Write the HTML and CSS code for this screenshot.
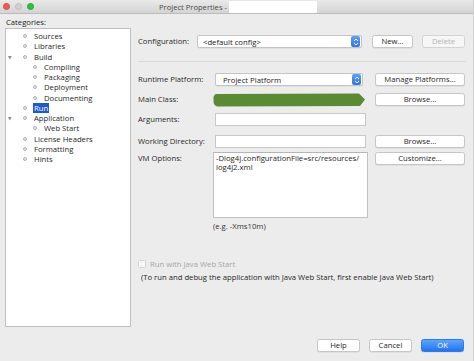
FILE: index.html
```html
<!DOCTYPE html>
<html>
<head>
<meta charset="utf-8">
<link rel="stylesheet" href="styles.css">
</head>
<body>
<div class="window">
  <div class="titlebar">
    <div class="lights">
      <span class="light red"></span>
      <span class="light gray"></span>
      <span class="light green"></span>
    </div>
    <div class="title"><span class="title-text">Project Properties -</span><span class="redact"></span></div>
  </div>
  <div class="main">
    <div class="left">
      <div class="cat-label">Categories:</div>
      <div class="tree">
        <div class="node l1"><span class="tw"></span><span class="dot"></span><span class="nt">Sources</span></div>
        <div class="node l1"><span class="tw"></span><span class="dot"></span><span class="nt">Libraries</span></div>
        <div class="node l1"><span class="tw">&#9660;</span><span class="dot"></span><span class="nt">Build</span></div>
        <div class="node l2"><span class="tw"></span><span class="dot"></span><span class="nt">Compiling</span></div>
        <div class="node l2"><span class="tw"></span><span class="dot"></span><span class="nt">Packaging</span></div>
        <div class="node l2"><span class="tw"></span><span class="dot"></span><span class="nt">Deployment</span></div>
        <div class="node l2"><span class="tw"></span><span class="dot"></span><span class="nt">Documenting</span></div>
        <div class="node l1"><span class="tw"></span><span class="dot"></span><span class="nt sel">Run</span></div>
        <div class="node l1"><span class="tw">&#9660;</span><span class="dot"></span><span class="nt">Application</span></div>
        <div class="node l2"><span class="tw"></span><span class="dot"></span><span class="nt">Web Start</span></div>
        <div class="node l1"><span class="tw"></span><span class="dot"></span><span class="nt">License Headers</span></div>
        <div class="node l1"><span class="tw"></span><span class="dot"></span><span class="nt">Formatting</span></div>
        <div class="node l1"><span class="tw"></span><span class="dot"></span><span class="nt">Hints</span></div>
      </div>
    </div>
    <div class="right">
      <div class="config-row">
        <span class="lbl cfg-lbl">Configuration:</span>
        <div class="combo cfg-combo"><span class="combo-text">&lt;default config&gt;</span><span class="stepper"><svg width="6" height="8" viewBox="0 0 6 8"><path d="M1 3 L3 1 L5 3 M1 5 L3 7 L5 5" fill="none" stroke="#fff" stroke-width="1"/></svg></span></div>
        <button class="btn btn-new">New...</button>
        <button class="btn btn-del" disabled>Delete</button>
      </div>
      <div class="sep"></div>
      <div class="form">
        <span class="lbl r1">Runtime Platform:</span>
        <div class="combo rt-combo r1"><span class="combo-text pp">Project Platform</span><span class="stepper"><svg width="6" height="8" viewBox="0 0 6 8"><path d="M1 3 L3 1 L5 3 M1 5 L3 7 L5 5" fill="none" stroke="#fff" stroke-width="1"/></svg></span></div>
        <button class="btn r1">Manage Platforms...</button>

        <span class="lbl r2">Main Class:</span>
        <div class="blob r2"><svg width="153" height="14" viewBox="0 0 153 14" preserveAspectRatio="none"><path d="M3 1 L146 0.5 L152 6.5 L147 13 L4 13.5 Q0 12 0.5 7 Q0 2 3 1 Z" fill="#5b8a35"/></svg></div>
        <button class="btn r2">Browse...</button>

        <span class="lbl r3">Arguments:</span>
        <div class="input r3"></div>
        <span class="r3"></span>

        <span class="lbl r4">Working Directory:</span>
        <div class="input r4"></div>
        <button class="btn r4">Browse...</button>

        <span class="lbl r5">VM Options:</span>
        <div class="textarea r5">-Dlog4j.configurationFile=src/resources/<br>log4j2.xml</div>
        <button class="btn r5">Customize...</button>

        <span class="r6"></span>
        <span class="hint r6">(e.g. -Xms10m)</span>
      </div>
      <div class="jws">
        <span class="chk"></span><span class="jws-text">Run with Java Web Start</span>
      </div>
      <div class="note">(To run and debug the application with Java Web Start, first enable Java Web Start)</div>
    </div>
  </div>
  <div class="footer">
    <button class="btn fbtn">Help</button>
    <button class="btn fbtn">Cancel</button>
    <button class="btn fbtn ok">OK</button>
  </div>
</div>
</body>
</html>
```

FILE: styles.css
```css
* { box-sizing: border-box; }
html, body { margin: 0; padding: 0; }
body {
  background: #ececec;
  font-family: "Open Sans", "DejaVu Sans", sans-serif;
  font-size: 7.7px;
  color: #262626;
}
.window {
  width: 474px;
  height: 361px;
  background: #ececec;
  display: flex;
  flex-direction: column;
  border-right: 1px solid #d0d0d0;
}
.titlebar {
  height: 14px;
  background: linear-gradient(#e9e9e9, #d4d4d4);
  border-bottom: 1px solid #bcbcbc;
  display: flex;
  align-items: center;
  position: relative;
}
.lights {
  display: flex;
  gap: 5px;
  padding-left: 3px;
}
.light {
  width: 7px;
  height: 7px;
  border-radius: 50%;
  display: block;
}
.light.red { background: #f25b55; border: 0.5px solid #d9463f; }
.light.gray { background: #d0d0d0; border: 0.5px solid #bdbdbd; }
.light.green { background: #2ac440; border: 0.5px solid #1ea82f; }
.title {
  position: absolute;
  left: 159px;
  top: 0;
  height: 13px;
  display: flex;
  align-items: center;
}
.title-text { color: #4a4a4a; font-size: 7.6px; }
.redact {
  display: block;
  width: 88px;
  height: 12px;
  margin-left: 2px;
  margin-top: 1px;
  background: #ffffff;
  border-radius: 1px;
}
.main {
  display: flex;
  height: 313px;
}
.left {
  width: 126px;
  margin-left: 5px;
  display: flex;
  flex-direction: column;
}
.cat-label {
  height: 14px;
  padding-top: 3px;
  padding-left: 1px;
  line-height: 10px;
  color: #222;
}
.tree {
  height: 299px;
  background: #fff;
  border: 1px solid #bfbfbf;
  padding-top: 2px;
}
.node {
  height: 10.25px;
  display: flex;
  align-items: center;
  line-height: 10px;
  white-space: nowrap;
}
.tw {
  width: 11px;
  padding-left: 2px;
  font-size: 4.5px;
  color: #8a8a8a;
  flex: none;
}
.dot {
  width: 4px;
  height: 4px;
  border-radius: 50%;
  border: 1px solid #b4b4b4;
  background: #e8e8e8;
  flex: none;
  margin-left: 6px;
}
.l2 .dot { margin-left: 16px; }
.nt {
  margin-left: 6px;
  padding: 0 1px;
  color: #1f1f1f;
}
.nt.sel {
  background: #1c5ad2;
  color: #fff;
}
.right {
  width: 328px;
  margin-left: 7px;
  padding-top: 21px;
  display: flex;
  flex-direction: column;
}
.config-row {
  display: flex;
  align-items: center;
  height: 13px;
}
.lbl { color: #2a2a2a; line-height: 13px; white-space: nowrap; }
.cfg-lbl { width: 59px; }
.combo {
  height: 13px;
  background: #fff;
  border: 1px solid #c4c4c4;
  border-radius: 2px;
  display: flex;
  align-items: center;
  justify-content: space-between;
  padding-left: 5px;
  padding-right: 1px;
  box-shadow: 0 0.5px 0.5px rgba(0,0,0,0.08);
}
.cfg-combo { width: 165px; }
.combo-text { color: #222; }
.combo-text.pp { padding-left: 2px; }
.stepper {
  width: 9px;
  height: 11px;
  border-radius: 2px;
  background: linear-gradient(#5ea0f8, #2c74ec);
  display: flex;
  align-items: center;
  justify-content: center;
}
.btn {
  height: 13px;
  background: #fff;
  border: 1px solid #c6c6c6;
  border-radius: 2.5px;
  font-family: inherit;
  font-size: 7.7px;
  color: #262626;
  padding: 0;
  line-height: 11px;
  box-shadow: 0 0.5px 0.5px rgba(0,0,0,0.1);
}
.btn-new { width: 41px; margin-left: 10px; }
.btn-del { width: 43px; margin-left: 9px; color: #b3b3b3; background: #f6f6f6; border-color: #d4d4d4; box-shadow: none; }
.sep {
  height: 1px;
  background: #d8d8d8;
  margin-top: 13px;
}
.form {
  margin-top: 11px;
  display: grid;
  grid-template-columns: 69px 151px 90px;
  column-gap: 8px;
  grid-template-rows: 20px 20px 22px 17px 68px 14px;
  align-items: start;
}
.form .btn { width: 90px; margin-left: 1px; }
.rt-combo { width: 148px; }
.blob { margin-left: -2px; height: 14px; }
.blob svg { display: block; }
.input {
  height: 13px;
  width: 151px;
  background: #fff;
  border: 1px solid #c8c8c8;
}
.textarea {
  margin-left: -2px;
  width: 155px;
  height: 66px;
  background: #fff;
  border: 1px solid #c2c2c2;
  border-top-color: #b5b5b5;
  padding: 1px 2px;
  line-height: 9px;
  color: #262626;
}
.hint {
  margin-left: -2px;
  line-height: 12px;
  color: #333;
}
.jws {
  margin-top: 25px;
  display: flex;
  align-items: center;
  height: 10px;
  padding-left: 0;
}
.chk {
  width: 8px;
  height: 8px;
  border: 1px solid #d2d2d2;
  background: #f7f7f7;
  border-radius: 1.5px;
  margin-right: 4px;
}
.jws-text { color: #a6a6a6; }
.note {
  margin-top: 3px;
  padding-left: 3px;
  line-height: 10px;
  color: #262626;
  white-space: nowrap;
}
.footer {
  display: flex;
  justify-content: flex-end;
  gap: 9px;
  padding-right: 9px;
  margin-top: 12px;
}
.fbtn { width: 43px; }
.ok {
  background: linear-gradient(#5aa5fb, #2274ef);
  border-color: #2d7af0;
  color: #fff;
}
```
